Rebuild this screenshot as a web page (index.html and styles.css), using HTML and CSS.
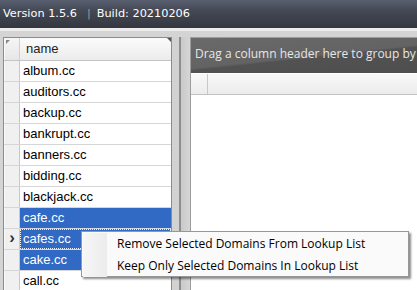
FILE: index.html
```html
<!DOCTYPE html>
<html>
<head>
<meta charset="utf-8">
<link rel="stylesheet" href="styles.css">
</head>
<body>
<div class="app">
  <div class="topbar">
    <span>Version 1.5.6</span><span class="sep">|</span><span>Build: 20210206</span>
  </div>
  <div class="main">
    <div class="left">
      <div class="grid">
        <div class="row head">
          <div class="ind"><span class="corner"></span></div>
          <div class="cell">name</div>
        </div>
        <div class="row"><div class="ind"></div><div class="cell">album.cc</div></div>
        <div class="row"><div class="ind"></div><div class="cell">auditors.cc</div></div>
        <div class="row"><div class="ind"></div><div class="cell">backup.cc</div></div>
        <div class="row"><div class="ind"></div><div class="cell">bankrupt.cc</div></div>
        <div class="row"><div class="ind"></div><div class="cell">banners.cc</div></div>
        <div class="row"><div class="ind"></div><div class="cell">bidding.cc</div></div>
        <div class="row"><div class="ind"></div><div class="cell">blackjack.cc</div></div>
        <div class="row sel"><div class="ind"></div><div class="cell">cafe.cc</div></div>
        <div class="row sel focus"><div class="ind">&#x203A;</div><div class="cell">cafes.cc</div></div>
        <div class="row sel"><div class="ind"></div><div class="cell">cake.cc</div></div>
        <div class="row"><div class="ind"></div><div class="cell">call.cc</div></div>
      </div>
    </div>
    <div class="splitter"></div>
    <div class="right">
      <div class="grouppanel">Drag a column header here to group by</div>
      <div class="colhead"><div class="ind"></div><div class="cell"></div></div>
      <div class="rbody"></div>
    </div>
  </div>
  <div class="menu">
    <div class="item"><div class="icon"></div><div class="label">Remove Selected Domains From Lookup List</div></div>
    <div class="item"><div class="icon"></div><div class="label">Keep Only Selected Domains In Lookup List</div></div>
  </div>
</div>
</body>
</html>
```

FILE: styles.css
```css
html, body {
  margin: 0;
  padding: 0;
}
body {
  width: 417px;
  height: 290px;
  overflow: hidden;
  background: #d9d9d9;
}
.app {
  position: relative;
  width: 417px;
  height: 290px;
  overflow: hidden;
  display: flex;
  flex-direction: column;
}
.topbar {
  height: 28px;
  flex: none;
  background: linear-gradient(#596070 0%, #454a56 35%, #33363f 100%);
  color: #ffffff;
  font-family: "DejaVu Sans", sans-serif;
  font-size: 11.3px;
  display: flex;
  align-items: center;
  padding-left: 3px;
  box-sizing: border-box;
  padding-bottom: 1px;
}
.topbar .sep {
  color: #9a9ca2;
  margin: 0 6px 0 10px;
}
.main {
  flex: 1;
  display: flex;
  border-top: 3px solid #ececec;
  background: #d4d4d4;
  padding-top: 6px;
  min-height: 0;
}
.left {
  width: 172px;
  flex: none;
  padding-left: 3px;
  box-sizing: border-box;
}
.grid {
  border: 1px solid #8c8c8c;
  border-bottom: none;
  background: #ffffff;
  height: 100%;
  box-sizing: border-box;
  font-family: "Liberation Sans", Arial, sans-serif;
  font-size: 13px;
  color: #000;
}
.row {
  display: flex;
  height: 21px;
  border-bottom: 1px solid #d6d6d6;
  box-sizing: border-box;
}
.row .ind {
  width: 16px;
  flex: none;
  background: #f0f0f0;
  border-right: 1px solid #c8c8c8;
  border-left: 1px solid #fafafa;
  box-sizing: border-box;
  display: flex;
  align-items: center;
  justify-content: center;
  font-size: 17px;
  font-weight: bold;
  color: #333;
  line-height: 1;
  padding-bottom: 3px;
}
.row .cell {
  flex: 1;
  padding-left: 3px;
  display: flex;
  align-items: center;
  box-sizing: border-box;
  padding-bottom: 1px;
}
.row.head {
  height: 23px;
  background: linear-gradient(#fbfbfb, #ececec);
  border-bottom: 1px solid #c4c4c4;
  color: #222;
}
.row.head .ind {
  background: linear-gradient(#f6f6f6, #e6e6e6);
  position: relative;
  border-right: 1px solid #d0d0d0;
}
.row.head .cell {
  padding-left: 6px;
  position: relative;
}
.row.head .cell::after {
  content: "";
  position: absolute;
  right: 0;
  top: 0;
  border-top: 4px solid #555;
  border-left: 4px solid transparent;
}
.corner {
  position: absolute;
  left: 1px;
  top: 2px;
  border-top: 4px solid #888;
  border-right: 4px solid transparent;
}
.row.sel .cell {
  background: #316ac5;
  color: #fff;
}
.row.focus .cell {
  outline: 1px dotted #e8eef8;
  outline-offset: -1px;
}
.splitter {
  width: 18px;
  flex: none;
  background: linear-gradient(90deg, #d2d2d2 0px, #d2d2d2 7px, #8e8e8e 7px, #8e8e8e 9px, #c9c9c9 9px, #d6d6d6 18px);
}
.right {
  flex: 1;
  border: 1px solid #9c9c9c;
  border-bottom: none;
  border-right: none;
  background: #ffffff;
  display: flex;
  flex-direction: column;
  min-width: 0;
}
.grouppanel {
  height: 35px;
  flex: none;
  box-sizing: border-box;
  background: linear-gradient(174deg, #6a6a6a 0%, #636363 52%, #525252 56%, #4e4e4e 100%);
  color: #e6e6e6;
  font-family: "Open Sans", sans-serif;
  font-size: 12px;
  white-space: nowrap;
  overflow: hidden;
  padding: 7px 0 0 4px;
}
.colhead {
  height: 20px;
  flex: none;
  display: flex;
  background: linear-gradient(#f8f8f8, #ececec);
  border-bottom: 1px solid #c2c2c2;
  border-top: 1px solid #ffffff;
}
.colhead .ind {
  width: 16px;
  border-right: 1px solid #c8c8c8;
}
.colhead .cell {
  flex: 1;
}
.rbody {
  flex: 1;
  background: #fff;
}
.menu {
  position: absolute;
  left: 81px;
  top: 231px;
  width: 328px;
  height: 46px;
  box-sizing: border-box;
  border: 1px solid #979797;
  background: #fafafa;
  box-shadow: 2px 2px 2px rgba(0, 0, 0, 0.45);
  padding: 1px;
  font-family: "Open Sans", sans-serif;
  font-size: 12px;
  color: #000;
}
.item {
  display: flex;
  height: 22px;
  align-items: center;
}
.icon {
  width: 24px;
  height: 100%;
  flex: none;
  background: linear-gradient(90deg, #f6f6f6, #ececec);
}
.label {
  padding-left: 10px;
  padding-bottom: 1px;
}
```
